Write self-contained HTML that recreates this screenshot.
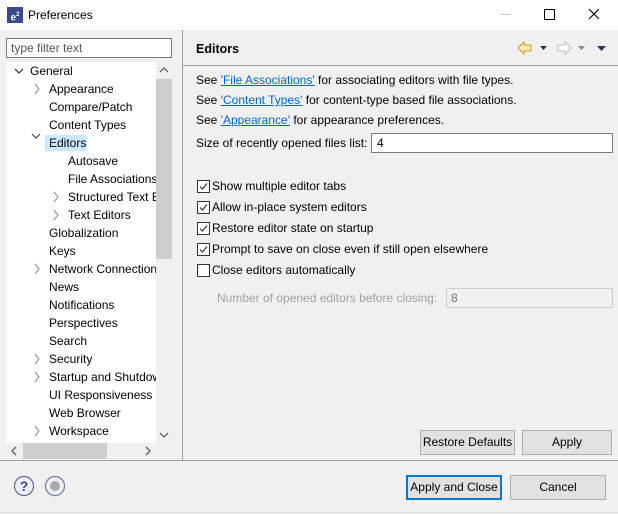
<!DOCTYPE html>
<html><head><meta charset="utf-8"><style>
*{margin:0;padding:0;box-sizing:border-box}
body{width:618px;height:514px;background:#f0f0f0;font-family:"Liberation Sans",sans-serif;font-size:12px;color:#000;position:relative;overflow:hidden}
.a{position:absolute;white-space:nowrap}
.t{position:absolute;white-space:nowrap;line-height:14px}
a{color:#0066cc;text-decoration:underline}
.cb{position:absolute;width:13px;height:13px;border:1px solid #333;background:#fff}
.btn{position:absolute;border:1px solid #adadad;background:#e1e1e1;text-align:center;line-height:23px}
.chev{position:absolute;color:#999;font-size:11px}
</style></head><body>
<div class="a" style="left:0;top:0;width:618px;height:30px;background:#fff"></div>
<div class="a" style="left:7px;top:7px;width:16px;height:16px;background:#3a4a8c;color:#fff;font-size:10px;font-weight:bold;line-height:16px;text-align:center">e<sup style="font-size:6px">2</sup></div>
<div class="t" style="left:28px;top:8px;font-size:12px">Preferences</div>
<div class="a" style="left:500px;top:14px;width:11px;height:1px;background:#ccc"></div>
<div class="a" style="left:544px;top:9px;width:11px;height:11px;border:1px solid #000"></div>
<svg class="a" style="left:588px;top:8px" width="12" height="12"><path d="M1 1L11 11M11 1L1 11" stroke="#000" stroke-width="1.2"/></svg>

<div class="a" style="left:6px;top:38px;width:166px;height:20px;border:1px solid #7a7a7a;background:#fff"></div>
<div class="t" style="left:11px;top:41px;color:#555">type filter text</div>

<div class="a" style="left:6px;top:62px;width:150px;height:381px;background:#fff;overflow:hidden">
<svg class="a" style="left:8px;top:6px" width="10" height="6"><path d="M1 1L5 5L9 1" stroke="#444" fill="none" stroke-width="1.3"/></svg>
<div class="t" style="left:24px;top:2px">General</div>
<div class="a" style="left:39px;top:73px;width:42px;height:16px;background:#cce8ff"></div>
<div class="t" style="left:43px;top:20px">Appearance</div>
<div class="t" style="left:43px;top:38px">Compare/Patch</div>
<div class="t" style="left:43px;top:56px">Content Types</div>
<div class="t" style="left:43px;top:74px">Editors</div>
<div class="t" style="left:62px;top:92px">Autosave</div>
<div class="t" style="left:62px;top:110px">File Associations</div>
<div class="t" style="left:62px;top:128px">Structured Text Editors</div>
<div class="t" style="left:62px;top:146px">Text Editors</div>
<div class="t" style="left:43px;top:164px">Globalization</div>
<div class="t" style="left:43px;top:182px">Keys</div>
<div class="t" style="left:43px;top:200px">Network Connections</div>
<div class="t" style="left:43px;top:218px">News</div>
<div class="t" style="left:43px;top:236px">Notifications</div>
<div class="t" style="left:43px;top:254px">Perspectives</div>
<div class="t" style="left:43px;top:272px">Search</div>
<div class="t" style="left:43px;top:290px">Security</div>
<div class="t" style="left:43px;top:308px">Startup and Shutdown</div>
<div class="t" style="left:43px;top:326px">UI Responsiveness Monitoring</div>
<div class="t" style="left:43px;top:344px">Web Browser</div>
<div class="t" style="left:43px;top:362px">Workspace</div>
<svg class="a" style="left:0;top:0" width="150" height="381">
<g stroke="#999" fill="none" stroke-width="1.2">
<path d="M29 22L33 27L29 32"/><path d="M26 72L30 76L34 72" stroke="#444"/>
<path d="M48 130L52 135L48 140"/><path d="M48 148L52 153L48 158"/>
<path d="M29 202L33 207L29 212"/><path d="M29 292L33 297L29 302"/><path d="M29 310L33 315L29 320"/><path d="M29 364L33 369L29 374"/>
</g></svg>
</div>
<div class="a" style="left:156px;top:62px;width:16px;height:381px;background:#f0f0f0"></div>
<div class="a" style="left:156px;top:79px;width:16px;height:180px;background:#cdcdcd"></div>
<svg class="a" style="left:156px;top:62px" width="16" height="381"><path d="M4 10L8 6L12 10" stroke="#606060" fill="none" stroke-width="1.3"/><path d="M4 371L8 375L12 371" stroke="#606060" fill="none" stroke-width="1.3"/></svg>
<div class="a" style="left:6px;top:443px;width:166px;height:16px;background:#f0f0f0"></div>
<div class="a" style="left:23px;top:443px;width:84px;height:16px;background:#cdcdcd"></div>
<svg class="a" style="left:6px;top:443px" width="150" height="16"><path d="M10 4L6 8L10 12" stroke="#606060" fill="none" stroke-width="1.3"/><path d="M140 4L144 8L140 12" stroke="#606060" fill="none" stroke-width="1.3"/></svg>

<div class="a" style="left:182px;top:30px;width:1px;height:430px;background:#a0a0a0"></div>
<div class="t" style="left:196px;top:42px;font-weight:bold;font-size:12.5px">Editors</div>
<svg class="a" style="left:516px;top:40px" width="95" height="16">
<path d="M2 8L8 2V5H15V11H8V14Z" fill="#fde9a8" stroke="#d49a2a"/>
<path d="M24 6H31L27.5 10Z" fill="#333"/>
<path d="M55 8L49 2V5H42V11H49V14Z" fill="#fff" stroke="#bbb"/>
<path d="M62 6H69L65.5 10Z" fill="#888"/>
<path d="M81 6H90L85.5 11Z" fill="#3a2a6a"/>
</svg>
<div class="a" style="left:183px;top:65px;width:435px;height:1px;background:#a0a0a0"></div>

<div class="t" style="left:196px;top:73px">See <a>'File Associations'</a> for associating editors with file types.</div>
<div class="t" style="left:196px;top:93px">See <a>'Content Types'</a> for content-type based file associations.</div>
<div class="t" style="left:196px;top:113px">See <a>'Appearance'</a> for appearance preferences.</div>
<div class="t" style="left:196px;top:136px">Size of recently opened files list:</div>
<div class="a" style="left:371px;top:133px;width:242px;height:20px;border:1px solid #7a7a7a;background:#fff"></div>
<div class="t" style="left:377px;top:136px">4</div>

<div class="cb" style="left:197px;top:180px"></div><div class="cb" style="left:197px;top:201px"></div><div class="cb" style="left:197px;top:222px"></div><div class="cb" style="left:197px;top:243px"></div><div class="cb" style="left:197px;top:264px"></div>
<svg class="a" style="left:197px;top:180px" width="13" height="80"><g stroke="#333" fill="none" stroke-width="1.2"><path d="M3 6.5L5.5 9L10 3.5"/><path d="M3 27.5L5.5 30L10 24.5"/><path d="M3 48.5L5.5 51L10 45.5"/><path d="M3 69.5L5.5 72L10 66.5"/></g></svg>
<div class="t" style="left:212px;top:179px">Show multiple editor tabs</div>
<div class="t" style="left:212px;top:200px">Allow in-place system editors</div>
<div class="t" style="left:212px;top:221px">Restore editor state on startup</div>
<div class="t" style="left:212px;top:242px">Prompt to save on close even if still open elsewhere</div>
<div class="t" style="left:212px;top:263px">Close editors automatically</div>
<div class="t" style="left:217px;top:291px;color:#a0a0a0">Number of opened editors before closing:</div>
<div class="a" style="left:446px;top:288px;width:167px;height:20px;border:1px solid #ccc;background:#f0f0f0"></div>
<div class="t" style="left:451px;top:291px;color:#777">8</div>

<div class="btn" style="left:420px;top:430px;width:95px;height:25px">Restore Defaults</div>
<div class="btn" style="left:522px;top:430px;width:90px;height:25px">Apply</div>
<div class="a" style="left:0;top:460px;width:618px;height:1px;background:#a0a0a0"></div>
<svg class="a" style="left:14px;top:476px" width="60" height="22"><circle cx="10" cy="10" r="9.5" fill="#eef" stroke="#5a6a8a" stroke-width="1.2"/><text x="10" y="15" text-anchor="middle" font-family="Liberation Sans" font-weight="bold" font-size="14" fill="#3a4a6a">?</text><circle cx="41" cy="10" r="9.5" fill="#f0f0f0" stroke="#6a7a9a" stroke-width="1.2"/><circle cx="41" cy="10" r="5" fill="#aaa"/></svg>
<div class="btn" style="left:406px;top:475px;width:96px;height:25px;border:2px solid #0078d7;line-height:21px">Apply and Close</div>
<div class="btn" style="left:510px;top:475px;width:96px;height:25px">Cancel</div>
<div class="a" style="left:0;top:512px;width:618px;height:1px;background:#ddd"></div>
</body></html>
